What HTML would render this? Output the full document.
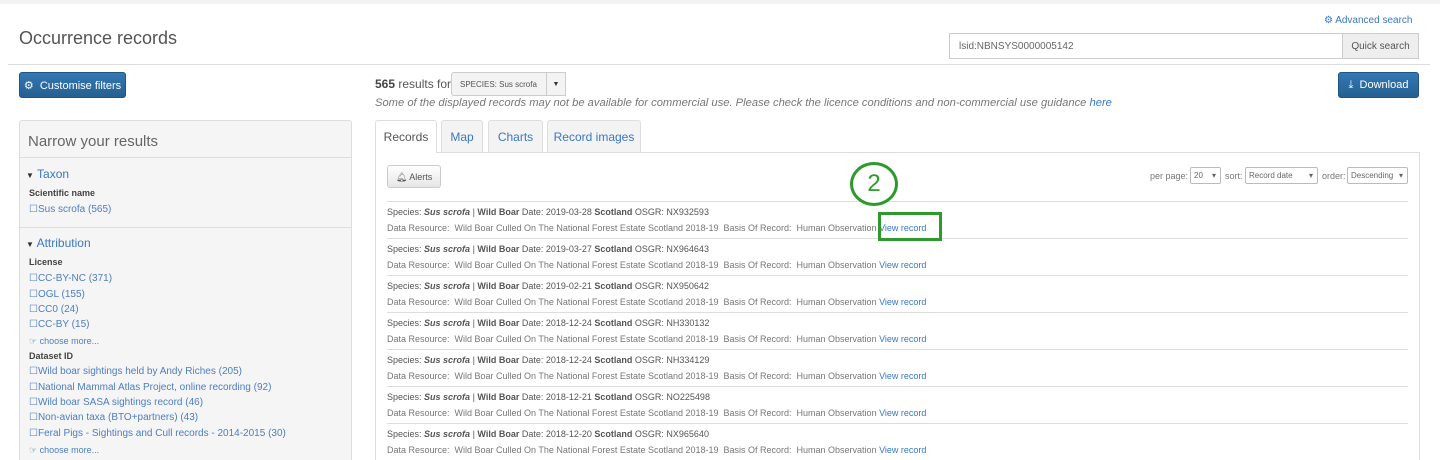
<!DOCTYPE html>
<html><head><meta charset="utf-8"><style>
*{margin:0;padding:0;box-sizing:border-box}
html,body{width:1440px;height:460px;overflow:hidden}
body{background:#fff;font-family:"Liberation Sans",sans-serif;color:#555;position:relative}
.a{position:absolute;white-space:nowrap}
.lnk{color:#3a78c2}
.btn{position:absolute;background:linear-gradient(#3478b5,#25608f);color:#fff;border:1px solid #1f5580;border-radius:3px;font-size:11px;display:flex;align-items:center;justify-content:center}
.side{font-size:10px;color:#4d7ec0}
.row1{font-size:9px;color:#555}
.row2{font-size:9px;color:#777}
.sep{position:absolute;left:387px;width:1021px;height:1px;background:#ddd}
.tab{position:absolute;top:120px;height:32px;border:1px solid #ddd;border-bottom:none;border-radius:3px 3px 0 0;background:#f3f3f3;color:#3a78c2;font-size:12px;display:flex;align-items:center;justify-content:center}
.sel{position:absolute;height:17px;border:1px solid #bbb;border-radius:2px;font-size:8px;color:#666;padding:3px 3px;background:#fff;white-space:nowrap;overflow:hidden}
.sel span{position:absolute;right:4px;top:3px}
</style></head><body>
<div class="a" style="left:0;top:0;width:1440px;height:4px;background:#f3f3f3"></div>
<div class="a" style="left:19px;top:28px;font-size:18px;color:#555">Occurrence records</div>
<div class="a lnk" style="left:1324px;top:15px;font-size:10px">⚙ Advanced search</div>
<div class="a" style="left:949px;top:33px;width:393px;height:26px;border:1px solid #ccc;border-right:none;font-size:10px;color:#666;padding:7px 9px">lsid:NBNSYS0000005142</div>
<div class="a" style="left:1342px;top:33px;width:77px;height:26px;border:1px solid #ccc;background:#eee;font-size:10px;color:#555;text-align:center;padding-top:7px">Quick search</div>
<div class="a" style="left:8px;top:64px;width:1422px;height:1px;background:#ddd"></div>
<div class="btn" style="left:19px;top:72px;width:107px;height:26px">⚙&nbsp; Customise filters</div>
<div class="btn" style="left:1338px;top:72px;width:81px;height:26px;font-size:11px">⤓&nbsp; Download</div>

<div class="a" style="left:19px;top:120px;width:333px;height:345px;background:#f5f5f5;border:1px solid #ddd;border-radius:3px"></div>
<div class="a" style="left:28px;top:133px;font-size:15px;color:#666">Narrow your results</div>
<div class="a" style="left:20px;top:157px;width:331px;height:1px;background:#ddd"></div>
<div class="a lnk" style="left:26px;top:167px;font-size:12px"><span style="font-size:8px;color:#333">▼</span> Taxon</div>
<div class="a" style="left:29px;top:188px;font-size:9px;font-weight:bold;color:#444">Scientific name</div>
<div class="a side" style="left:29px;top:204px">☐Sus scrofa (565)</div>
<div class="a" style="left:20px;top:227px;width:331px;height:1px;background:#ddd"></div>
<div class="a lnk" style="left:26px;top:236px;font-size:12px"><span style="font-size:8px;color:#333">▼</span> Attribution</div>
<div class="a" style="left:29px;top:257px;font-size:9px;font-weight:bold;color:#444">License</div>
<div class="a side" style="left:29px;top:273px">☐CC-BY-NC (371)</div>
<div class="a side" style="left:29px;top:289px">☐OGL (155)</div>
<div class="a side" style="left:29px;top:304px">☐CC0 (24)</div>
<div class="a side" style="left:29px;top:319px">☐CC-BY (15)</div>
<div class="a side" style="left:29px;top:336px;font-size:9px">☞ choose more...</div>
<div class="a" style="left:29px;top:351px;font-size:9px;font-weight:bold;color:#444">Dataset ID</div>
<div class="a side" style="left:29px;top:366px">☐Wild boar sightings held by Andy Riches (205)</div>
<div class="a side" style="left:29px;top:382px">☐National Mammal Atlas Project, online recording (92)</div>
<div class="a side" style="left:29px;top:397px">☐Wild boar SASA sightings record (46)</div>
<div class="a side" style="left:29px;top:412px">☐Non-avian taxa (BTO+partners) (43)</div>
<div class="a side" style="left:29px;top:428px">☐Feral Pigs - Sightings and Cull records - 2014-2015 (30)</div>
<div class="a side" style="left:29px;top:445px;font-size:9px">☞ choose more...</div>

<div class="a" style="left:375px;top:77px;font-size:12px;color:#555"><b style="color:#444">565</b> results for</div>
<div class="a" style="left:451px;top:72px;width:96px;height:24px;border:1px solid #ccc;background:#f3f3f3;font-size:8px;color:#555;padding:7px 8px;border-radius:3px 0 0 3px">SPECIES: Sus scrofa</div>
<div class="a" style="left:546px;top:72px;width:20px;height:24px;border:1px solid #ccc;background:#f3f3f3;font-size:7px;color:#333;text-align:center;padding-top:8px">▼</div>
<div class="a" style="left:375px;top:97px;font-size:11.2px;font-style:italic;color:#777">Some of the displayed records may not be available for commercial use. Please check the licence conditions and non-commercial use guidance <span class="lnk">here</span></div>

<div class="a" style="left:375px;top:152px;width:1045px;height:320px;border:1px solid #ddd"></div>
<div class="tab" style="left:375px;width:62px;background:#fff;color:#555;height:33px;z-index:2">Records</div>
<div class="tab" style="left:441px;width:42px">Map</div>
<div class="tab" style="left:488px;width:55px">Charts</div>
<div class="tab" style="left:547px;width:94px">Record images</div>

<div class="a" style="left:387px;top:165px;width:54px;height:23px;border:1px solid #ccc;border-radius:3px;background:linear-gradient(#fff,#e6e6e6);font-size:9px;color:#555;text-align:center;padding-top:6px">🔔︎ Alerts</div>
<div class="a" style="left:1150px;top:171px;font-size:9px;color:#777">per page:</div>
<div class="sel" style="left:1190px;top:167px;width:31px">20<span>▾</span></div>
<div class="a" style="left:1225px;top:171px;font-size:9px;color:#777">sort:</div>
<div class="sel" style="left:1245px;top:167px;width:73px">Record date<span>▾</span></div>
<div class="a" style="left:1322px;top:171px;font-size:9px;color:#777">order:</div>
<div class="sel" style="left:1347px;top:167px;width:61px">Descending<span>▾</span></div>

<div class="sep" style="top:201px"></div>
<div class="a row1" style="left:387px;top:207px">Species: <b><i>Sus scrofa</i></b> | <b>Wild Boar</b> Date: 2019-03-28 <b>Scotland</b> OSGR: NX932593</div>
<div class="a row2" style="left:387px;top:223px">Data Resource: &nbsp;Wild Boar Culled On The National Forest Estate Scotland 2018-19 &nbsp;Basis Of Record: &nbsp;Human Observation <span class="lnk">View record</span></div>
<div class="sep" style="top:238px"></div>
<div class="a row1" style="left:387px;top:244px">Species: <b><i>Sus scrofa</i></b> | <b>Wild Boar</b> Date: 2019-03-27 <b>Scotland</b> OSGR: NX964643</div>
<div class="a row2" style="left:387px;top:260px">Data Resource: &nbsp;Wild Boar Culled On The National Forest Estate Scotland 2018-19 &nbsp;Basis Of Record: &nbsp;Human Observation <span class="lnk">View record</span></div>
<div class="sep" style="top:275px"></div>
<div class="a row1" style="left:387px;top:281px">Species: <b><i>Sus scrofa</i></b> | <b>Wild Boar</b> Date: 2019-02-21 <b>Scotland</b> OSGR: NX950642</div>
<div class="a row2" style="left:387px;top:297px">Data Resource: &nbsp;Wild Boar Culled On The National Forest Estate Scotland 2018-19 &nbsp;Basis Of Record: &nbsp;Human Observation <span class="lnk">View record</span></div>
<div class="sep" style="top:312px"></div>
<div class="a row1" style="left:387px;top:318px">Species: <b><i>Sus scrofa</i></b> | <b>Wild Boar</b> Date: 2018-12-24 <b>Scotland</b> OSGR: NH330132</div>
<div class="a row2" style="left:387px;top:334px">Data Resource: &nbsp;Wild Boar Culled On The National Forest Estate Scotland 2018-19 &nbsp;Basis Of Record: &nbsp;Human Observation <span class="lnk">View record</span></div>
<div class="sep" style="top:349px"></div>
<div class="a row1" style="left:387px;top:355px">Species: <b><i>Sus scrofa</i></b> | <b>Wild Boar</b> Date: 2018-12-24 <b>Scotland</b> OSGR: NH334129</div>
<div class="a row2" style="left:387px;top:371px">Data Resource: &nbsp;Wild Boar Culled On The National Forest Estate Scotland 2018-19 &nbsp;Basis Of Record: &nbsp;Human Observation <span class="lnk">View record</span></div>
<div class="sep" style="top:386px"></div>
<div class="a row1" style="left:387px;top:392px">Species: <b><i>Sus scrofa</i></b> | <b>Wild Boar</b> Date: 2018-12-21 <b>Scotland</b> OSGR: NO225498</div>
<div class="a row2" style="left:387px;top:408px">Data Resource: &nbsp;Wild Boar Culled On The National Forest Estate Scotland 2018-19 &nbsp;Basis Of Record: &nbsp;Human Observation <span class="lnk">View record</span></div>
<div class="sep" style="top:423px"></div>
<div class="a row1" style="left:387px;top:429px">Species: <b><i>Sus scrofa</i></b> | <b>Wild Boar</b> Date: 2018-12-20 <b>Scotland</b> OSGR: NX965640</div>
<div class="a row2" style="left:387px;top:445px">Data Resource: &nbsp;Wild Boar Culled On The National Forest Estate Scotland 2018-19 &nbsp;Basis Of Record: &nbsp;Human Observation <span class="lnk">View record</span></div>

<div class="a" style="left:850px;top:162px;width:48px;height:44px;border:3px solid #2e9a2e;border-radius:50%;background:#fff;color:#2e9a2e;font-size:24px;text-align:center;line-height:38px">2</div>
<div class="a" style="left:878px;top:212px;width:64px;height:29px;border:3px solid #2e9a2e"></div>
</body></html>
